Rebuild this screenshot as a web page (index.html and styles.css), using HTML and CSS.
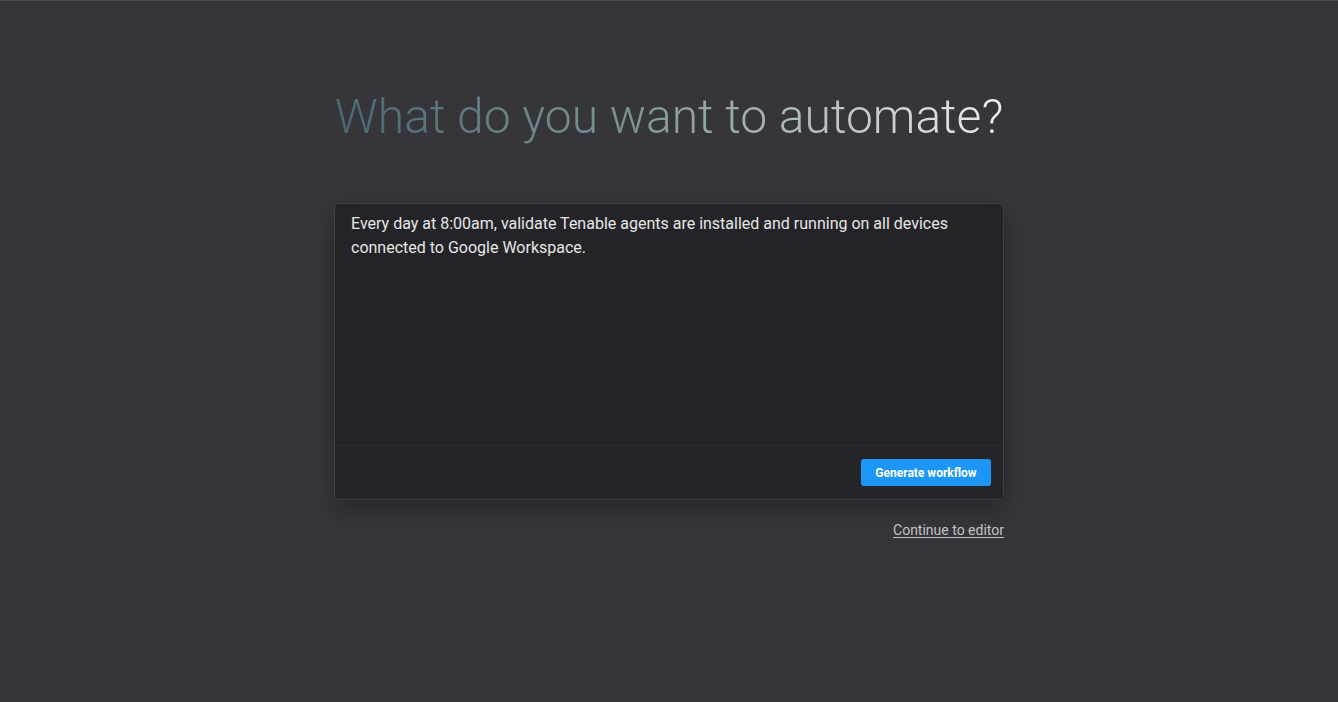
FILE: index.html
```html
<!DOCTYPE html>
<html lang="en">
<head>
<meta charset="utf-8">
<title>What do you want to automate?</title>
<link rel="stylesheet" href="styles.css">
</head>
<body>
<div class="topline"></div>
<main class="wrap">
  <div class="title-row"><h1 class="title">What do you want to automate?</h1></div>
  <div class="card">
    <div class="prompt">Every day at 8:00am, validate Tenable agents are installed and running on all devices connected to Google Workspace.</div>
    <div class="card-footer">
      <button class="btn">Generate workflow</button>
    </div>
  </div>
  <div class="links"><a class="editor-link" href="#">Continue to editor</a></div>
</main>
</body>
</html>
```
FILE: styles.css
```css
html, body {
  margin: 0;
  padding: 0;
  height: 100%;
}
body {
  background: #36353a;
  font-family: Roboto, "Noto Sans", "Liberation Sans", sans-serif;
  color: #e4e4e4;
}
.topline {
  height: 1px;
  background: #4a4a50;
}
.wrap {
  width: 670px;
  margin: 0 auto;
  padding-top: 88px;
}
.title-row {
  display: flex;
  justify-content: center;
}
.title {
  margin: 0;
  font-size: 48px;
  font-weight: 300;
  line-height: 56px;
  white-space: nowrap;
  background: linear-gradient(90deg, #486770 0%, #7d9497 45%, #ececec 100%);
  -webkit-background-clip: text;
  background-clip: text;
  color: transparent;
}
.card {
  margin-top: 58px;
  background: #242428;
  border: 1px solid #404046;
  border-radius: 5px;
  box-shadow: 0 10px 24px rgba(0, 0, 0, 0.28);
  overflow: hidden;
}
.prompt {
  height: 233px;
  padding: 8px 16px 0 16px;
  font-size: 16px;
  line-height: 24px;
  color: #e6e6e6;
  border-bottom: 1px solid #2c2c31;
}
.card-footer {
  height: 53px;
  display: flex;
  justify-content: flex-end;
  align-items: flex-start;
  padding: 13px 12px 0 0;
  box-sizing: border-box;
  background: #252529;
}
.btn {
  height: 27px;
  width: 130px;
  border: none;
  border-radius: 3px;
  background: #1c97f8;
  color: #ffffff;
  font-family: Roboto, "Noto Sans", "Liberation Sans", sans-serif;
  font-size: 12px;
  font-weight: 700;
  padding: 0;
  cursor: pointer;
}
.links {
  display: flex;
  justify-content: flex-end;
  margin-top: 22px;
}
.editor-link {
  font-size: 14px;
  font-weight: 400;
  color: #c2c2c5;
  text-decoration: underline;
  text-underline-offset: 2px;
  line-height: 16px;
}
```
